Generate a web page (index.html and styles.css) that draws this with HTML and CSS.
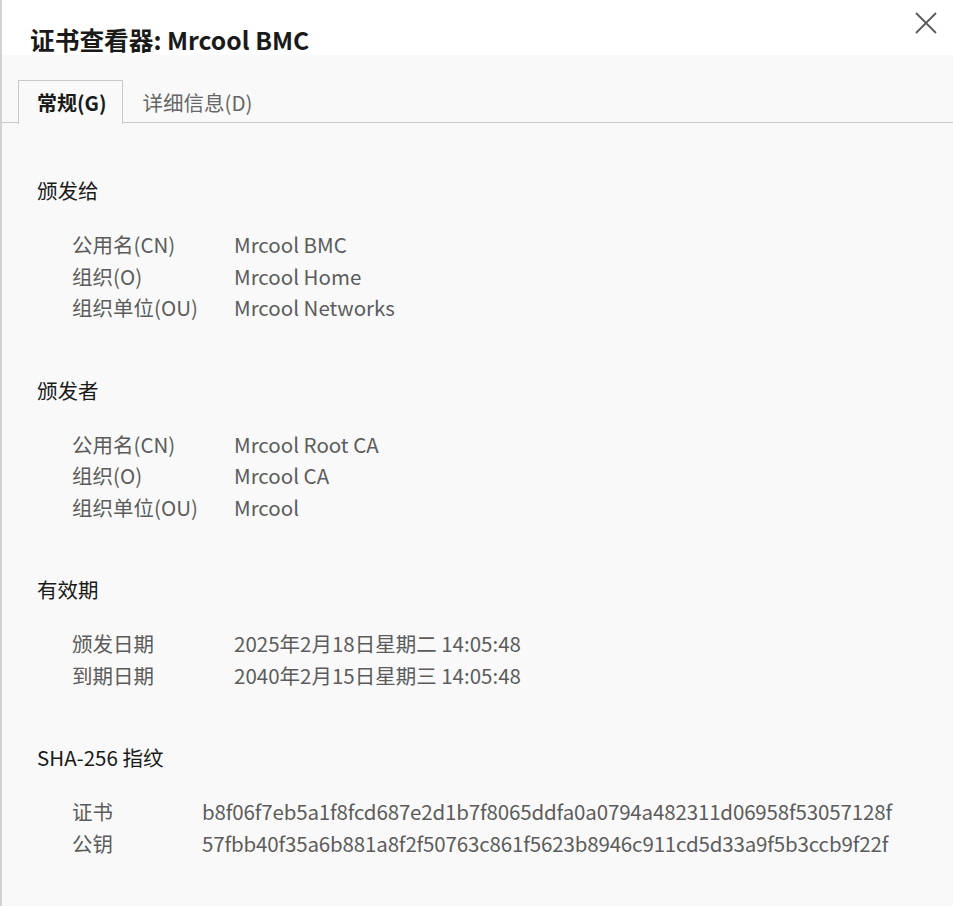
FILE: index.html
```html
<!DOCTYPE html>
<html lang="zh-CN">
<head>
<meta charset="utf-8">
<title>证书查看器: Mrcool BMC</title>
<link rel="stylesheet" href="styles.css">
</head>
<body>
<div class="dialog">
  <header class="titlebar">
    <h1 class="title">证书查看器: Mrcool BMC</h1>
    <button class="close" aria-label="关闭">
      <svg width="22" height="22" viewBox="0 0 22 22"><path d="M1 1 L21 21 M21 1 L1 21" stroke="#5a5a5a" stroke-width="1.8" fill="none"/></svg>
    </button>
  </header>
  <nav class="tabs">
    <div class="tab active">常规(G)</div>
    <div class="tab">详细信息(D)</div>
  </nav>
  <main class="content">
    <section class="section">
      <h2 class="heading">颁发给</h2>
      <dl class="rows">
        <dt>公用名(CN)</dt><dd>Mrcool BMC</dd>
        <dt>组织(O)</dt><dd>Mrcool Home</dd>
        <dt>组织单位(OU)</dt><dd>Mrcool Networks</dd>
      </dl>
    </section>
    <section class="section">
      <h2 class="heading">颁发者</h2>
      <dl class="rows">
        <dt>公用名(CN)</dt><dd>Mrcool Root CA</dd>
        <dt>组织(O)</dt><dd>Mrcool CA</dd>
        <dt>组织单位(OU)</dt><dd>Mrcool</dd>
      </dl>
    </section>
    <section class="section">
      <h2 class="heading">有效期</h2>
      <dl class="rows">
        <dt>颁发日期</dt><dd>2025年2月18日星期二 14:05:48</dd>
        <dt>到期日期</dt><dd>2040年2月15日星期三 14:05:48</dd>
      </dl>
    </section>
    <section class="section">
      <h2 class="heading">SHA-256 指纹</h2>
      <dl class="rows rows-narrow">
        <dt>证书</dt><dd class="hash">b8f06f7eb5a1f8fcd687e2d1b7f8065ddfa0a0794a482311d06958f53057128f</dd>
        <dt>公钥</dt><dd class="hash">57fbb40f35a6b881a8f2f50763c861f5623b8946c911cd5d33a9f5b3ccb9f22f</dd>
      </dl>
    </section>
  </main>
</div>
</body>
</html>
```

FILE: styles.css
```css
* { box-sizing: border-box; }
html, body { margin: 0; padding: 0; height: 100%; }
body {
  font-family: "Noto Sans CJK SC", "Noto Sans", sans-serif;
  background: #f9f9f9;
  color: #222;
}
.dialog {
  min-height: 906px;
  border-left: 2px solid #d2d2d2;
  background: #f9f9f9;
}
.titlebar {
  height: 55px;
  background: #fff;
  display: flex;
  align-items: flex-start;
  justify-content: space-between;
  padding-left: 28px;
}
.title {
  margin: 0;
  padding-top: 23px;
  font-size: 24.7px;
  line-height: 32px;
  font-weight: 700;
  color: #1a1a1a;
}
.close {
  margin: 12px 16px 0 0;
  padding: 0;
  border: 0;
  background: transparent;
  width: 22px;
  height: 22px;
}
.close svg { display: block; }
.tabs {
  margin-top: 25px;
  display: flex;
  padding-left: 16px;
  border-bottom: 1px solid #c9c9c9;
  height: 43px;
}
.tab {
  font-size: 20.5px;
  line-height: 44px;
  padding: 0 19px 0 19px;
  color: #666;
}
.tab.active {
  font-weight: 700;
  color: #1a1a1a;
  border: 1px solid #c9c9c9;
  border-bottom: 0;
  background: #f9f9f9;
  margin-bottom: -1px;
  height: 44px;
  line-height: 44px;
  padding: 0 16px 0 18px;
  font-size: 20px;
}
.content {
  padding: 51px 0 0 35px;
}
.section { margin-bottom: 50px; }
.heading {
  margin: 0;
  font-size: 20.5px;
  font-weight: 400;
  line-height: 32px;
  color: #1a1a1a;
}
.rows {
  margin: 23px 0 0 35px;
  display: grid;
  grid-template-columns: 162px 1fr;
  font-size: 20.5px;
  line-height: 31.5px;
  color: #5c5c5c;
}
.rows dt, .rows dd { margin: 0; white-space: nowrap; }
.rows-narrow { grid-template-columns: 130px 1fr; }
.hash { letter-spacing: -0.15px; }
```
